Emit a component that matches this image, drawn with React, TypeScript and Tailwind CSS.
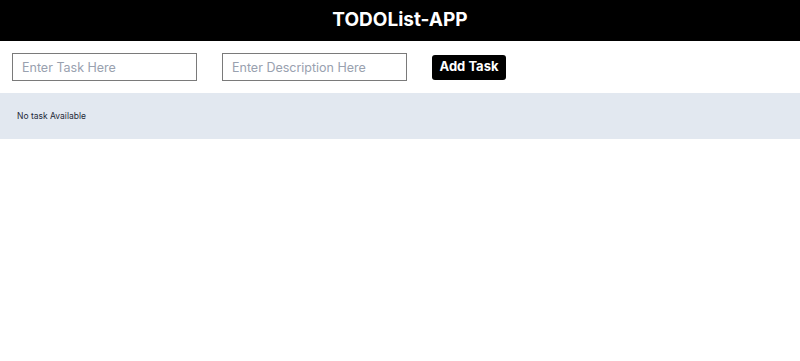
import { useState } from 'react'

export default function App() {
  const [task, setTask] = useState('')
  const [desc, setDesc] = useState('')

  return (
    <div className="min-h-screen bg-white font-['Inter',sans-serif]">
      {/* Header */}
      <div className="h-[41px] bg-black flex items-center justify-center">
        <h1 className="text-white text-[19px] font-bold">TODOList-APP</h1>
      </div>

      {/* Form */}
      <div className="flex items-center gap-[25px] pl-3 pt-3 pb-3">
        <input
          type="text"
          value={task}
          onChange={(e) => setTask(e.target.value)}
          placeholder="Enter Task Here"
          className="w-[185px] h-[28px] border border-[#7a7a7a] px-[9px] text-[12.5px] placeholder-gray-400 outline-none"
        />
        <input
          type="text"
          value={desc}
          onChange={(e) => setDesc(e.target.value)}
          placeholder="Enter Description Here"
          className="w-[185px] h-[28px] border border-[#7a7a7a] px-[9px] text-[12.5px] placeholder-gray-400 outline-none"
        />
        <button className="w-[74px] h-[25px] bg-black text-white text-[13px] font-bold rounded-[3px]">
          Add Task
        </button>
      </div>

      {/* Task list */}
      <div className="bg-[#e2e8f0] h-[46px] flex items-center pl-[17px]">
        <p className="text-[8.5px] text-gray-800">No task Available</p>
      </div>
    </div>
  )
}
